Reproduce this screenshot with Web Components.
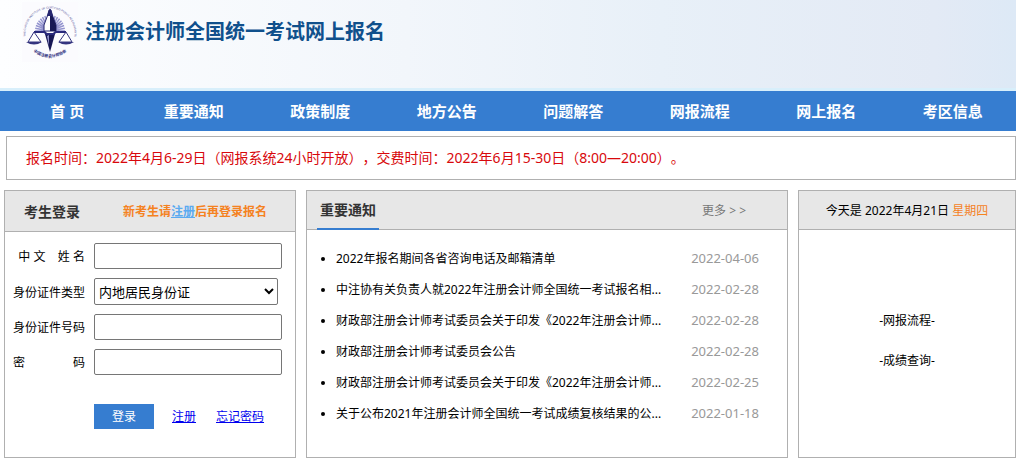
<!DOCTYPE html>
<html lang="zh-CN">
<head>
<meta charset="utf-8">
<meta name="viewport" content="width=device-width, initial-scale=1">
<title>注册会计师全国统一考试网上报名</title>
<style>
    body {
        margin: 0;
        background: white;
        color: black;
        font: 12px/18px "Noto Sans", "Noto Sans CJK SC", sans-serif;
        text-spacing-trim: space-all;
    }

    main {
        display: grid;
        grid-template-columns: 292fr 482fr 218fr;
        gap: 10px;
        margin: 10px 0 5px 4px;
    }
</style>
</head>
<body>
    <topp-banner>注册会计师全国统一考试网上报名</topp-banner>
    <hoved-meny></hoved-meny>
    <melding-boks>报名时间：2022年4月6-29日（网报系统24小时开放），交费时间：2022年6月15-30日（8:00—20:00）。</melding-boks>
    <main>
        <login-panel></login-panel>
        <nyhets-panel></nyhets-panel>
        <dato-panel></dato-panel>
    </main>

<script>
const panelStil = `
    :host {
        display: block;
        box-sizing: border-box;
        border: 1px solid #b0b0b0;
        background: white;
        min-width: 0;
    }

    header {
        display: flex;
        align-items: center;
        box-sizing: border-box;
        height: 39px;
        padding-top: 2px;
        background: #e7e7e7;
        border-bottom: 1px solid #b0b0b0;
    }

    h2 {
        margin: 0;
        font-size: 14px;
        line-height: 20px;
        color: #333;
    }
`

class ToppBanner extends HTMLElement {
    constructor() {
        super()
        this.shadow = this.attachShadow({ mode: 'open' });
    }

    // rays of the half sun behind the scales
    straaler() {
        let yeh = ""
        for (let v = 0; v <= 180; v += 10) {
            const r = v * Math.PI / 180
            const x = Math.cos(r), y = Math.sin(r)
            yeh += `M${(27 + 6 * x).toFixed(1)} ${(29 - 6 * y).toFixed(1)}L${(27 + 15 * x).toFixed(1)} ${(29 - 16 * y).toFixed(1)}`
        }
        return yeh
    }

    connectedCallback() {
        this.shadow.innerHTML = `
            <style>
                :host {
                    display: block;
                    background: linear-gradient(to right, #fdfeff, #f2f6fb 40%, #e8f0f8 65%, #e3eaf5 92%, #dde9f6);
                    border-bottom: 3px solid #d8effb;
                }

                header {
                    display: flex;
                    align-items: flex-start;
                    gap: 7px;
                    height: 86px;
                    padding: 2px 0 0 22px;
                }

                svg {
                    flex: none;
                    overflow: visible;
                    background: #fbfbfe;
                }

                h1 {
                    margin: 15px 0 0;
                    font-size: 20px;
                    line-height: 30px;
                    color: #10508c;
                }
            </style>
            <header>
                <svg width="56" height="60" viewBox="-1 0 56 60" aria-hidden="true">
                    <defs>
                        <path id="ring" d="M4.800 41.400A24.500 24.500 0 1 1 49.200 41.400"/>
                        <path id="bue" d="M6 46Q27 65 48 46"/>
                    </defs>
                    <g fill="#4a4992" font-family="Liberation Sans, sans-serif">
                        <text font-size="2.700"><textPath href="#ring" startOffset="50%" text-anchor="middle">THE CHINESE INSTITUTE OF CERTIFIED PUBLIC ACCOUNTANTS</textPath></text>
                        <text font-size="4" font-weight="bold" font-family="Noto Sans CJK SC, sans-serif" fill="#29297b"><textPath href="#bue" startOffset="50%" text-anchor="middle">中国注册会计师协会</textPath></text>
                    </g>
                    <path d="${this.straaler()}" stroke="#9494cf" stroke-width="1.500" fill="none"/>
                    <path d="M27 7L21 23V29H33V23Z" fill="#fff" stroke="#25256f"/>
                    <path d="M27 7V29H33V23Z" fill="#171755"/>
                    <path d="M25.500 8H28.500L30 14H24Z" fill="#25256f"/>
                    <path d="M22 32H32L27 50Z" fill="#171755"/>
                    <path d="M26 33V44L24 34Z" fill="#9090c8"/>
                    <path d="M11 29H22L24 31H30L32 29H43V31H33L31 33H23L21 31H11Z" fill="#29297b"/>
                    <path d="M11 30L5 40H18ZM43 30L36 40H49Z" fill="#fff" fill-opacity=".7" stroke="#34347f"/>
                    <path d="M3 40H19Q11 45 3 40ZM35 40H51Q43 45 35 40Z" fill="#34347f"/>
                </svg>
                <h1><slot></slot></h1>
            </header>
        `
    }
}

customElements.define("topp-banner", ToppBanner)

class HovedMeny extends HTMLElement {
    constructor(ruter = ["首 页", "重要通知", "政策制度", "地方公告", "问题解答", "网报流程", "网上报名", "考区信息"]) {
        super()
        this.shadow = this.attachShadow({ mode: 'open' });
        this.ruter = ruter
    }

    connectedCallback() {
        this.shadow.innerHTML = `
            <style>
                :host {
                    display: block;
                    background: #367dd0;
                }

                nav {
                    display: grid;
                    grid-template-columns: repeat(8, 1fr);
                    padding-left: 4px;
                }

                a {
                    color: white;
                    font-size: 15px;
                    font-weight: bold;
                    line-height: 40px;
                    text-align: center;
                    text-decoration: none;
                }
            </style>
            <nav>${this.ruter.map(rute => `<a href="#">${rute}</a>`).join("")}</nav>
        `
    }
}

customElements.define("hoved-meny", HovedMeny)

class MeldingBoks extends HTMLElement {
    constructor() {
        super()
        this.shadow = this.attachShadow({ mode: 'open' });
    }

    connectedCallback() {
        this.shadow.innerHTML = `
            <style>
                :host {
                    display: block;
                    margin: 5px 0 0 6px;
                    padding: 11px 19px;
                    border: 1px solid #b0b0b0;
                    color: #d8080c;
                    font-size: 14px;
                    line-height: 20px;
                }

                p {
                    margin: 0;
                }
            </style>
            <p><slot></slot></p>
        `
    }
}

customElements.define("melding-boks", MeldingBoks)

class LoginPanel extends HTMLElement {
    constructor() {
        super()
        this.shadow = this.attachShadow({ mode: 'open' });
    }

    connectedCallback() {
        this.shadow.innerHTML = `
            <style>
                ${panelStil}

                header {
                    height: 41px;
                    justify-content: space-between;
                    padding: 2px 28px 0 19px;
                }

                p {
                    margin: 0;
                    font-weight: bold;
                    color: #f5821f;
                }

                p a {
                    color: #5aaaf0;
                }

                form {
                    padding: 11px 13px 28px 7px;
                }

                .felt {
                    display: grid;
                    grid-template-columns: 73px 1fr;
                    align-items: center;
                    gap: 9px;
                }

                label {
                    padding-top: 2px;
                    text-align: right;
                    white-space: nowrap;
                }

                input, select {
                    box-sizing: border-box;
                    width: 100%;
                    min-width: 0;
                    height: 26px;
                    margin: 0;
                    border: 1px solid #767676;
                    border-radius: 2px;
                    background: white;
                    color: black;
                    font: 13px "Noto Sans", "Noto Sans CJK SC", sans-serif;
                }

                .valg {
                    padding-right: 4px;
                }

                select {
                    display: block;
                    height: 27px;
                    padding: 0;
                }

                .knapper {
                    display: flex;
                    align-items: center;
                    padding: 29px 0 0 82px;
                    white-space: nowrap;
                }

                button {
                    flex: none;
                    width: 60px;
                    height: 25px;
                    margin-right: 18px;
                    padding: 0;
                    border: none;
                    background: #367dd0;
                    color: white;
                    font: inherit;
                    cursor: pointer;
                }

                .knapper a {
                    color: #0000ee;
                }

                .knapper a + a {
                    margin-left: 20px;
                }
            </style>
            <header>
                <h2>考生登录</h2>
                <p>新考生请<a href="#">注册</a>后再登录报名</p>
            </header>
            <form>
                <div class="felt">
                    <label for="navn">中&nbsp;文&nbsp;&nbsp;&nbsp;&nbsp;姓&nbsp;名</label>
                    <input id="navn" type="text">
                    <label for="type">身份证件类型</label>
                    <div class="valg"><select id="type"><option>内地居民身份证</option></select></div>
                    <label for="nummer">身份证件号码</label>
                    <input id="nummer" type="text">
                    <label for="passord">密&#12288;&#12288;&#12288;&#12288;码</label>
                    <input id="passord" type="password">
                </div>
                <div class="knapper">
                    <button type="button">登录</button>
                    <a href="#">注册</a>
                    <a href="#">忘记密码</a>
                </div>
            </form>
        `
    }
}

customElements.define("login-panel", LoginPanel)

class NyhetsPanel extends HTMLElement {
    constructor(nyheter = [
        { tittel: "2022年报名期间各省咨询电话及邮箱清单", dato: "2022-04-06" },
        { tittel: "中注协有关负责人就2022年注册会计师全国统一考试报名相...", dato: "2022-02-28" },
        { tittel: "财政部注册会计师考试委员会关于印发《2022年注册会计师...", dato: "2022-02-28" },
        { tittel: "财政部注册会计师考试委员会公告", dato: "2022-02-28" },
        { tittel: "财政部注册会计师考试委员会关于印发《2022年注册会计师...", dato: "2022-02-25" },
        { tittel: "关于公布2021年注册会计师全国统一考试成绩复核结果的公...", dato: "2022-01-18" }
    ]) {
        super()
        this.shadow = this.attachShadow({ mode: 'open' });
        this.nyheter = nyheter
    }

    linjer() {
        let yeh = ""

        this.nyheter.forEach(nyhet => {
            yeh += `
                <li><div><a href="#">${nyhet.tittel}</a><time>${nyhet.dato}</time></div></li>
            `
        })

        return yeh
    }

    connectedCallback() {
        this.shadow.innerHTML = `
            <style>
                ${panelStil}

                header {
                    justify-content: space-between;
                    padding: 2px 41px 0 10px;
                }

                h2 {
                    align-self: stretch;
                    margin-bottom: -1px;
                    padding: 0 3px;
                    border-bottom: 2px solid #367dd0;
                    line-height: 34px;
                }

                header a {
                    color: #777;
                    text-decoration: none;
                }

                ul {
                    margin: 0;
                    padding: 13px 28px 13px 29px;
                }

                li div {
                    display: flex;
                    justify-content: space-between;
                    line-height: 31px;
                    white-space: nowrap;
                }

                li a {
                    color: black;
                    text-decoration: none;
                }

                time {
                    color: #999;
                    font-size: 13px;
                }
            </style>
            <header>
                <h2>重要通知</h2>
                <a href="#">更多 &gt; &gt;</a>
            </header>
            <ul>${this.linjer()}</ul>
        `
    }
}

customElements.define("nyhets-panel", NyhetsPanel)

class DatoPanel extends HTMLElement {
    constructor() {
        super()
        this.shadow = this.attachShadow({ mode: 'open' });
    }

    connectedCallback() {
        this.shadow.innerHTML = `
            <style>
                ${panelStil}

                header {
                    justify-content: center;
                    white-space: pre;
                }

                span {
                    color: #f5821f;
                }

                nav {
                    display: flex;
                    flex-direction: column;
                    align-items: center;
                    padding-top: 71px;
                }

                a {
                    color: black;
                    line-height: 40px;
                    text-decoration: none;
                }
            </style>
            <header>今天是 2022年4月21日 <span>星期四</span></header>
            <nav>
                <a href="#">-网报流程-</a>
                <a href="#">-成绩查询-</a>
            </nav>
        `
    }
}

customElements.define("dato-panel", DatoPanel)
</script>
</body>
</html>
